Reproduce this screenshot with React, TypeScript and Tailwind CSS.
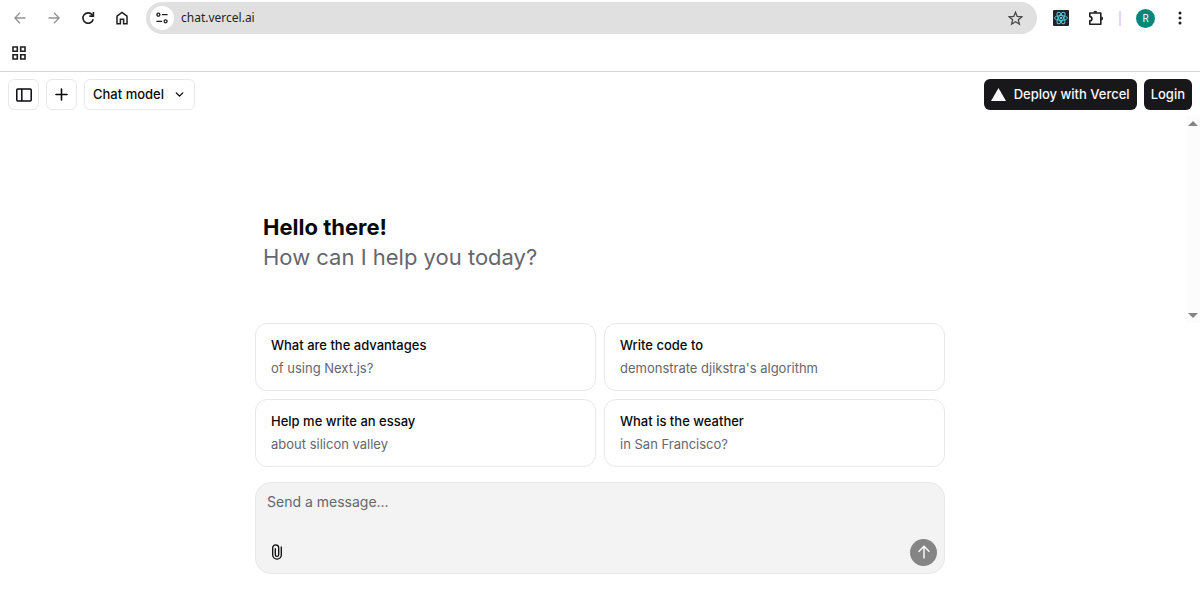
import type { ReactNode } from "react";
import { ChevronDown, Plus } from "lucide-react";

const suggestions = [
    { title: "What are the advantages", label: "of using Next.js?" },
    { title: "Write code to", label: "demonstrate djikstra's algorithm" },
    { title: "Help me write an essay", label: "about silicon valley" },
    { title: "What is the weather", label: "in San Francisco?" },
];

function IconButton({ label, className = "", children }: { label: string; className?: string; children: ReactNode }) {
    return (
        <button type="button" aria-label={label} className={`flex shrink-0 items-center justify-center ${className}`}>
            {children}
        </button>
    );
}

function BrowserBar() {
    return (
        <div className="h-[72px] shrink-0 border-b border-[#d5d5d5] text-[#1f1f1f]">
            <div className="flex h-9 items-center px-[11px]">
                <div className="flex items-center gap-4">
                    <IconButton label="Back" className="size-[18px] text-[#949494]">
                        <svg width="12" height="12" viewBox="0 0 12 12" fill="none" stroke="currentColor" strokeWidth="1.3">
                            <path d="M11.5 6H1M6 .8.9 6 6 11.2" />
                        </svg>
                    </IconButton>
                    <IconButton label="Forward" className="size-[18px] text-[#949494]">
                        <svg width="12" height="12" viewBox="0 0 12 12" fill="none" stroke="currentColor" strokeWidth="1.3">
                            <path d="M.5 6H11M6 .8 11.1 6 6 11.2" />
                        </svg>
                    </IconButton>
                    <IconButton label="Reload" className="size-[18px]">
                        <svg width="14" height="14" viewBox="0 0 14 14" fill="none" stroke="currentColor" strokeWidth="1.6">
                            <path d="M12.2 8.2A5.2 5.2 0 1 1 11.2 3.8L12.3 5" />
                            <path d="M12.4 1V5.1H8.3" />
                        </svg>
                    </IconButton>
                    <IconButton label="Home" className="size-[18px]">
                        <svg width="12" height="14" viewBox="0 0 12 14" fill="none" stroke="currentColor" strokeWidth="1.5">
                            <path d="M1 5.2 6 1.4l5 3.8v7.6H7.6V8.3H4.4v4.5H1V5.2Z" />
                        </svg>
                    </IconButton>
                </div>

                <div className="ml-[15px] flex h-8 min-w-0 flex-1 items-center rounded-full bg-[#e0e0e0] pr-3 pl-1">
                    <IconButton label="View site information" className="size-6 rounded-full bg-white">
                        <svg width="12" height="12" viewBox="0 0 12 12" fill="none" stroke="currentColor" strokeWidth="1.3">
                            <circle cx="2.4" cy="2.7" r="1.5" />
                            <path d="M6 2.7h5.6M.4 9.3H6" />
                            <circle cx="9.6" cy="9.3" r="1.5" />
                        </svg>
                    </IconButton>
                    <input
                        aria-label="Address"
                        defaultValue="chat.vercel.ai"
                        className="ml-[7px] min-w-0 flex-1 bg-transparent font-['Noto_Sans',sans-serif] text-[12px] outline-none"
                    />
                    <IconButton label="Bookmark this page" className="size-5 text-[#474747]">
                        <svg width="15" height="15" viewBox="0 0 15 15" fill="none" stroke="currentColor" strokeWidth="1.3">
                            <path d="m7.5 1.3 1.7 4.2 4.5.4-3.4 2.9 1.1 4.4-3.9-2.4-3.9 2.4 1.1-4.4L1.3 5.9l4.5-.4 1.7-4.2Z" />
                        </svg>
                    </IconButton>
                </div>

                <div className="ml-[15px] flex items-center">
                    <IconButton label="React Developer Tools" className="size-[18px]">
                        <svg width="16" height="16" viewBox="0 0 16 16" fill="none" stroke="#58c4dc" strokeWidth="1">
                            <rect width="16" height="16" rx="1" fill="#20232a" stroke="none" />
                            <ellipse cx="8" cy="8" rx="6.4" ry="2.5" />
                            <ellipse cx="8" cy="8" rx="6.4" ry="2.5" transform="rotate(60 8 8)" />
                            <ellipse cx="8" cy="8" rx="6.4" ry="2.5" transform="rotate(120 8 8)" />
                            <circle cx="8" cy="8" r="1.3" fill="#58c4dc" stroke="none" />
                        </svg>
                    </IconButton>
                    <IconButton label="Extensions" className="ml-[17px] size-[18px]">
                        <svg width="16" height="16" viewBox="0 0 16 16" fill="none" stroke="currentColor" strokeWidth="1.6">
                            <path d="M1.8 3h11v11.2h-11v-3.4a2 2 0 0 0 0-4.2V3Z" strokeLinejoin="round" />
                            <path d="M5.4 2.6a1.9 1.9 0 0 1 3.8 0ZM13.2 6.6a1.9 1.9 0 0 1 0 3.8Z" fill="currentColor" stroke="none" />
                        </svg>
                    </IconButton>
                    <span className="ml-[14px] h-[15px] w-[2px] bg-[#e6d2fa]" />
                    <IconButton label="Profile" className="ml-[15px] size-[19px] rounded-full bg-[#00897b] font-[Roboto,sans-serif] text-[10px] text-white">
                        R
                    </IconButton>
                    <IconButton label="Browser menu" className="ml-4 size-[18px]">
                        <svg width="4" height="14" viewBox="0 0 4 14" fill="currentColor">
                            <circle cx="2" cy="2" r="1.5" />
                            <circle cx="2" cy="7" r="1.5" />
                            <circle cx="2" cy="12" r="1.5" />
                        </svg>
                    </IconButton>
                </div>
            </div>

            <div className="flex h-[34px] items-center px-[10px]">
                <IconButton label="Apps" className="size-[18px]">
                    <svg width="14" height="14" viewBox="0 0 14 14" fill="none" stroke="currentColor" strokeWidth="1.6">
                        <path d="M1 1h4.3v4.3H1zM8.7 1H13v4.3H8.7zM1 8.7h4.3V13H1zM8.7 8.7H13V13H8.7z" />
                    </svg>
                </IconButton>
            </div>
        </div>
    );
}

function ChatHeader() {
    return (
        <header className="flex shrink-0 items-center gap-[7px] px-2 pt-[7px] pb-[6px] text-[13px] font-medium">
            <IconButton label="Toggle sidebar" className="size-[31px] rounded-md border border-[#e8e8ea]">
                <svg width="16" height="14" viewBox="0 0 16 14" fill="none" stroke="currentColor" strokeWidth="1.5">
                    <rect x=".8" y="1" width="14.4" height="12" rx="1" />
                    <path d="M5.8 1v12" />
                </svg>
            </IconButton>
            <IconButton label="New chat" className="size-[31px] rounded-md border border-[#e8e8ea]">
                <Plus size={19} strokeWidth={2} />
            </IconButton>
            <button type="button" className="flex h-[31px] items-center gap-[9px] rounded-md border border-[#e8e8ea] px-2">
                Chat model
                <ChevronDown size={13} strokeWidth={2.5} />
            </button>
            <a href="#deploy" className="ml-auto flex h-[31px] items-center gap-2 rounded-md bg-[#18181b] px-[7px] text-[#fafafa]">
                <svg width="15" height="13" viewBox="0 0 15 13" fill="currentColor">
                    <path d="M7.5 0 15 13H0Z" />
                </svg>
                Deploy with Vercel
            </a>
            <a href="#login" className="flex h-[31px] items-center rounded-md bg-[#18181b] px-[7px] text-[#fafafa]">
                Login
            </a>
        </header>
    );
}

export default function App() {
    return (
        <div className="flex min-h-screen flex-col bg-white font-[Inter,sans-serif] text-[#09090b]">
            <BrowserBar />
            <ChatHeader />

            <main className="flex flex-1 flex-col">
                <section className="flex flex-1">
                    <div className="mr-[-14px] flex-1 px-4 pt-24">
                        <div className="mx-auto max-w-[690px] px-2 text-[22px] leading-[30px]">
                            <h1 className="font-bold">Hello there!</h1>
                            <p className="text-[#66666f]">How can I help you today?</p>
                        </div>
                    </div>
                    {/* Scroll track beside the messages */}
                    <div className="flex w-[14px] flex-col items-center justify-between bg-[#fcfcfc] py-[5px] text-[#858585]">
                        <svg width="10" height="5" viewBox="0 0 10 5" fill="currentColor">
                            <path d="M5 0 10 5H0Z" />
                        </svg>
                        <svg width="10" height="5" viewBox="0 0 10 5" fill="currentColor">
                            <path d="M0 0H10L5 5Z" />
                        </svg>
                    </div>
                </section>

                <form className="mx-auto w-full max-w-[690px] pb-4">
                    <div className="grid grid-cols-2 gap-2">
                        {suggestions.map((suggestion) => (
                            <button
                                key={suggestion.title}
                                type="button"
                                className="rounded-xl border border-[#e8e8ea] px-[15px] py-[10px] text-left text-[13px] leading-[23px]"
                            >
                                <span className="block font-medium">{suggestion.title}</span>
                                <span className="block text-[#66666f]">{suggestion.label}</span>
                            </button>
                        ))}
                    </div>

                    <div className="mt-[15px] rounded-2xl border border-[#e8e8ea] bg-[#f3f3f3]">
                        <textarea
                            aria-label="Message"
                            placeholder="Send a message..."
                            className="block h-[55px] w-full resize-none bg-transparent px-[11px] pt-2 text-[14px] leading-[22px] outline-none placeholder:text-[#66666f]"
                        />
                        <div className="flex items-center justify-between px-[7px] pb-[7px]">
                            <IconButton label="Attach files" className="size-7">
                                <svg width="12" height="16" viewBox="0 0 12 16" fill="none" stroke="currentColor" strokeWidth="1.3">
                                    <path d="M10.3 2.6v8.2a4.3 4.3 0 0 1-8.6 0V3.8a3 3 0 0 1 6 0v6.9a1.7 1.7 0 0 1-3.4 0V4.2" />
                                </svg>
                            </IconButton>
                            <IconButton label="Send message" className="size-[27px] rounded-full bg-[#858586] text-white">
                                <svg width="14" height="14" viewBox="0 0 14 14" fill="none" stroke="currentColor" strokeWidth="1.4">
                                    <path d="M7 13.5V1.3M1.6 6.7 7 1.3l5.4 5.4" />
                                </svg>
                            </IconButton>
                        </div>
                    </div>
                </form>
            </main>
        </div>
    );
}
